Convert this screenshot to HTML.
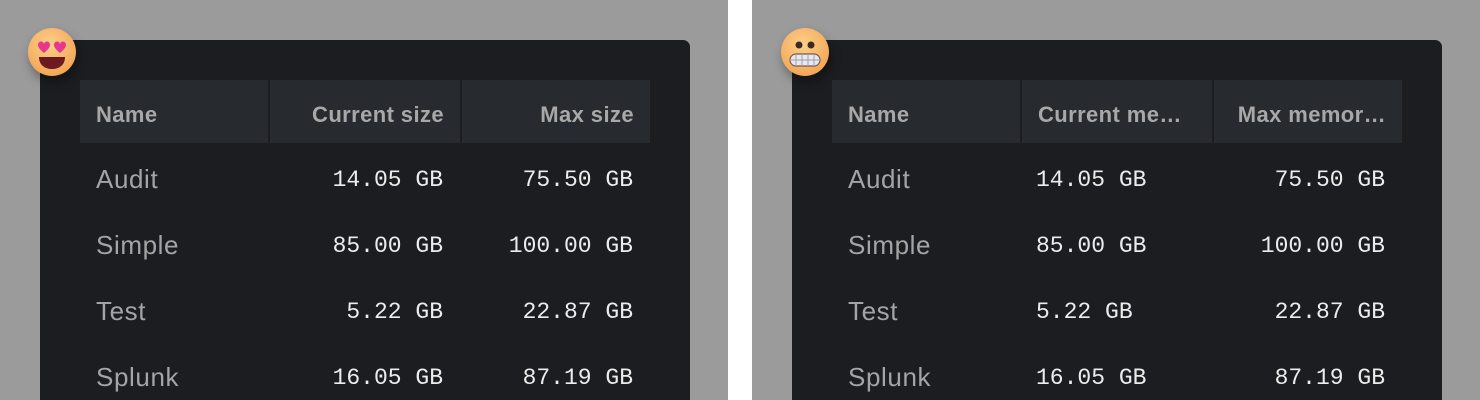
<!DOCTYPE html>
<html><head><style>
*{margin:0;padding:0;box-sizing:border-box}
html,body{width:1480px;height:400px;overflow:hidden}
body{background:#9b9b9b;position:relative;font-family:"Liberation Sans",sans-serif}
.gap{position:absolute;left:728px;top:0;width:24px;height:400px;background:#fff}
.panel{position:absolute;top:40px;width:650px;height:360px;background:#1c1d20;border-radius:7px 7px 0 0}
table{position:absolute;left:40px;top:40px;border-collapse:separate;border-spacing:0;width:570px;table-layout:fixed}
th{background:#272a2f;height:63px;padding:6px 16px 0;color:#a8a8a8;font-size:22px;letter-spacing:0.4px;font-weight:bold;text-align:right;border-left:2px solid #1c1d20;white-space:nowrap;overflow:hidden}
th:first-child{text-align:left;border-left:0}
td{height:66px;padding:7px 17px 0 16px;text-align:right;font-family:"Liberation Mono",monospace;font-size:23px;color:#ececec;white-space:nowrap}
td:first-child{text-align:left;font-family:"Liberation Sans",sans-serif;font-size:26px;letter-spacing:0.6px;color:#a4a4a4}
.r th:nth-child(2),.r td:nth-child(2){text-align:left}
.emo{position:absolute;top:28px;width:48px;height:48px;border-radius:50%;background:radial-gradient(circle at 45% 35%,#fcd08a,#f3a95a 70%,#e0904a);box-shadow:2px 6px 10px rgba(0,0,0,.35)}
</style></head><body>
<div class="gap"></div>
<div class="panel" style="left:40px">
<table><colgroup><col style="width:188px"><col style="width:192px"><col style="width:190px"></colgroup><tr><th>Name</th><th>Current size</th><th>Max size</th></tr>
<tr><td>Audit</td><td>14.05 GB</td><td>75.50 GB</td></tr>
<tr><td>Simple</td><td>85.00 GB</td><td>100.00 GB</td></tr>
<tr><td>Test</td><td>5.22 GB</td><td>22.87 GB</td></tr>
<tr><td>Splunk</td><td>16.05 GB</td><td>87.19 GB</td></tr></table></div>
<div class="panel" style="left:792px">
<table class="r"><colgroup><col style="width:188px"><col style="width:192px"><col style="width:190px"></colgroup><tr><th>Name</th><th>Current me…</th><th>Max memor…</th></tr>
<tr><td>Audit</td><td>14.05 GB</td><td>75.50 GB</td></tr>
<tr><td>Simple</td><td>85.00 GB</td><td>100.00 GB</td></tr>
<tr><td>Test</td><td>5.22 GB</td><td>22.87 GB</td></tr>
<tr><td>Splunk</td><td>16.05 GB</td><td>87.19 GB</td></tr></table></div>
<div class="emo" style="left:28px"><svg width="48" height="48" viewBox="0 0 48 48">
<path d="M10 17c0-4 5-5 6-1 1-4 6-3 6 1 0 3-4 6-6 8-2-2-6-5-6-8z" fill="#e8358f"/>
<path d="M26 17c0-4 5-5 6-1 1-4 6-3 6 1 0 3-4 6-6 8-2-2-6-5-6-8z" fill="#e8358f"/>
<path d="M11 29h26c0 8-6 12-13 12s-13-4-13-12z" fill="#6b1a22"/>
<path d="M16 37c4 3 12 3 16 0-3 3-13 3-16 0z" fill="#e0556a"/></svg></div>
<div class="emo" style="left:781px"><svg width="48" height="48" viewBox="0 0 48 48">
<circle cx="18" cy="17" r="3.5" fill="#3a2a22"/><circle cx="30" cy="17" r="3.5" fill="#3a2a22"/>
<rect x="9" y="26" width="30" height="12" rx="6" fill="#e8e8f0" stroke="#7a5a4a" stroke-width="1.2"/>
<path d="M9 32h30M15 26v12M21 26v12M27 26v12M33 26v12" stroke="#a0a0b0" stroke-width="1"/></svg></div>
</body></html>
